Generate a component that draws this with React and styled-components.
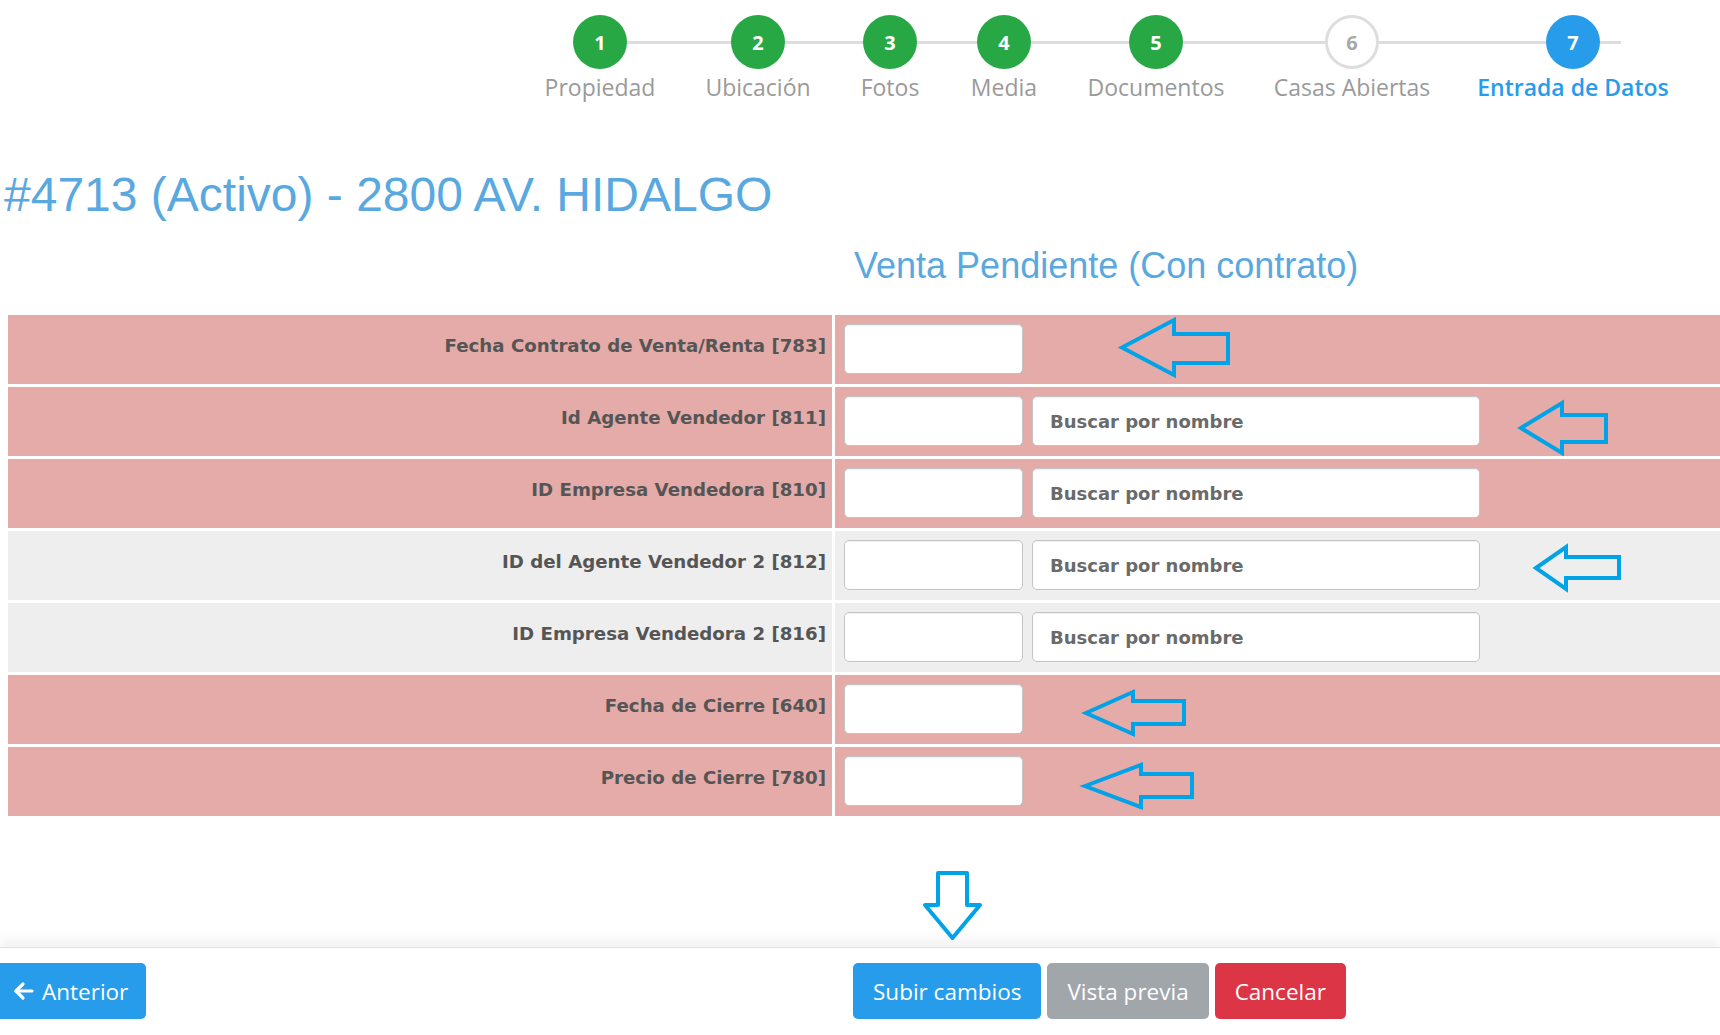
import React from "react";
import styled, { createGlobalStyle } from "styled-components";

const GlobalStyle = createGlobalStyle`
  html, body { margin: 0; padding: 0; background: #fff; }
  * { box-sizing: border-box; }
`;

const Page = styled.div`
  position: relative;
  height: 100vh;
  min-height: 1035px;
  display: flex;
  flex-direction: column;
  font-family: "Open Sans", "Noto Sans", sans-serif;
  overflow: hidden;
`;

const Stepper = styled.div`
  position: relative;
  display: flex;
  padding-top: 15px;
  height: 110px;
  &::before {
    content: "";
    position: absolute;
    left: 600px;
    width: 1021px;
    top: 41px;
    height: 3px;
    background: #dddddd;
  }
`;

const Step = styled.div`
  width: 100px;
  margin-left: ${(p) => p.$ml}px;
  display: flex;
  flex-direction: column;
  align-items: center;
  position: relative;
  z-index: 1;
`;

const Circle = styled.div`
  width: 54px;
  height: 54px;
  border-radius: 50%;
  display: flex;
  align-items: center;
  justify-content: center;
  font-weight: 700;
  font-size: 20px;
  background: ${(p) => (p.$state === "done" ? "#28a745" : p.$state === "active" ? "#279ceb" : "#fff")};
  color: ${(p) => (p.$state === "todo" ? "#a8a8a8" : "#fff")};
  border: ${(p) => (p.$state === "todo" ? "3px solid #dddddd" : "none")};
`;

const StepLabel = styled.div`
  margin-top: 3px;
  white-space: nowrap;
  font-size: 23px;
  line-height: 30px;
  color: ${(p) => (p.$active ? "#279ceb" : "#9a9a9a")};
  font-weight: ${(p) => (p.$active ? 600 : 400)};
`;

const Title = styled.h1`
  margin: 55px 0 0 4px;
  font-family: "Liberation Sans", Arial, sans-serif;
  font-weight: 400;
  font-size: 48px;
  line-height: 60px;
  color: #59a9e0;
`;

const SectionHeading = styled.h2`
  margin: 19px 0 0 854px;
  font-family: "Liberation Sans", Arial, sans-serif;
  font-weight: 400;
  font-size: 36px;
  line-height: 43px;
  color: #59a9e0;
`;

const FormTable = styled.div`
  margin: 28px 0 0 8px;
  display: grid;
  grid-template-columns: 824px 1fr;
  column-gap: 3px;
  row-gap: 3px;
`;

const LabelCell = styled.div`
  height: 69px;
  background: ${(p) => (p.$tone === "pink" ? "#e4aba8" : "#eeeeee")};
  text-align: right;
  padding: 21px 6px 0 0;
  font-family: "DejaVu Sans", Verdana, sans-serif;
  font-weight: 700;
  font-size: 18.2px;
  line-height: 20px;
  color: #555555;
`;

const ValueCell = styled.div`
  height: 69px;
  background: ${(p) => (p.$tone === "pink" ? "#e4aba8" : "#eeeeee")};
  display: flex;
  gap: 9px;
  padding: 9px 0 0 9px;
`;

const Input = styled.input`
  width: ${(p) => (p.$wide ? 448 : 179)}px;
  height: 50px;
  border: 1px solid #c4c4c4;
  border-radius: 5px;
  background: #fff;
  padding: 0 17px;
  font-family: "DejaVu Sans", Verdana, sans-serif;
  font-weight: 700;
  font-size: 18px;
  color: #555;
  box-shadow: inset 0 1px 1px rgba(0, 0, 0, 0.06);
  &::placeholder { color: #6a6a6a; opacity: 1; }
`;

const Footer = styled.footer`
  margin-top: auto;
  height: 88px;
  background: #fff;
  border-top: 1px solid #e0e0e0;
  box-shadow: 0 -7px 12px rgba(0, 0, 0, 0.06);
  display: grid;
  grid-template-columns: 853px 1fr;
  align-items: start;
  padding-top: 15px;
  position: relative;
  z-index: 2;
`;

const ButtonGroup = styled.div`
  display: flex;
  gap: 6px;
`;

const Button = styled.button`
  height: 56px;
  padding: 0 20px;
  border: none;
  border-radius: 5px;
  font-family: "Open Sans", "Noto Sans", sans-serif;
  font-size: 22.5px;
  color: #fff;
  display: inline-flex;
  align-items: center;
  gap: 8px;
  background: ${(p) => (p.$variant === "secondary" ? "#a1a6ab" : p.$variant === "danger" ? "#dc3545" : "#279ceb")};
`;

const BackButton = styled(Button)`
  width: 146px;
  padding: 0 0 0 13px;
  border-radius: 0 5px 5px 0;
`;

const ArrowSvg = styled.svg`
  position: absolute;
  left: ${(p) => p.$x}px;
  top: ${(p) => p.$y}px;
  overflow: visible;
  z-index: 3;
  pointer-events: none;
`;

const BLUE = "#00a2e8";

function LeftArrow({ x, y, w, h, head, s1, s2 }) {
  const pts = `0,${h / 2} ${head},0 ${head},${s1} ${w},${s1} ${w},${s2} ${head},${s2} ${head},${h} 0,${h / 2}`;
  return (
    <ArrowSvg $x={x} $y={y} width={w} height={h} viewBox={`0 0 ${w} ${h}`}>
      <polygon points={pts} fill="none" stroke={BLUE} strokeWidth="4" strokeLinejoin="miter" />
    </ArrowSvg>
  );
}

function DownArrow({ x, y }) {
  const w = 55;
  const h = 65;
  const pts = `13,0 42,0 42,32 ${w},32 27.5,${h} 0,32 13,32 13,0`;
  return (
    <ArrowSvg $x={x} $y={y} width={w} height={h} viewBox={`0 0 ${w} ${h}`}>
      <polygon points={pts} fill="none" stroke={BLUE} strokeWidth="4" strokeLinejoin="round" />
    </ArrowSvg>
  );
}

function ArrowLeftIcon() {
  return (
    <svg width="21" height="20" viewBox="0 0 21 20" fill="none" stroke="#fff" strokeWidth="3.2" strokeLinecap="round" strokeLinejoin="round">
      <path d="M19 10H3" />
      <path d="M10 3L3 10l7 7" />
    </svg>
  );
}

const steps = [
  { n: 1, label: "Propiedad", state: "done", ml: 550 },
  { n: 2, label: "Ubicación", state: "done", ml: 58 },
  { n: 3, label: "Fotos", state: "done", ml: 32 },
  { n: 4, label: "Media", state: "done", ml: 14 },
  { n: 5, label: "Documentos", state: "done", ml: 52 },
  { n: 6, label: "Casas Abiertas", state: "todo", ml: 96 },
  { n: 7, label: "Entrada de Datos", state: "active", ml: 121 },
];

const rows = [
  { label: "Fecha Contrato de Venta/Renta [783]", tone: "pink", search: false },
  { label: "Id Agente Vendedor [811]", tone: "pink", search: true },
  { label: "ID Empresa Vendedora [810]", tone: "pink", search: true },
  { label: "ID del Agente Vendedor 2 [812]", tone: "grey", search: true },
  { label: "ID Empresa Vendedora 2 [816]", tone: "grey", search: true },
  { label: "Fecha de Cierre [640]", tone: "pink", search: false },
  { label: "Precio de Cierre [780]", tone: "pink", search: false },
];

export default function App() {
  return (
    <>
      <GlobalStyle />
      <Page>
        <Stepper>
          {steps.map((s) => (
            <Step key={s.n} $ml={s.ml}>
              <Circle $state={s.state}>{s.n}</Circle>
              <StepLabel $active={s.state === "active"}>{s.label}</StepLabel>
            </Step>
          ))}
        </Stepper>

        <Title>#4713 (Activo) - 2800 AV. HIDALGO</Title>
        <SectionHeading>Venta Pendiente (Con contrato)</SectionHeading>

        <FormTable>
          {rows.map((r) => (
            <React.Fragment key={r.label}>
              <LabelCell $tone={r.tone}>{r.label}</LabelCell>
              <ValueCell $tone={r.tone}>
                <Input />
                {r.search && <Input $wide placeholder="Buscar por nombre" />}
              </ValueCell>
            </React.Fragment>
          ))}
        </FormTable>

        <LeftArrow x={1122} y={320} w={106} h={55} head={52} s1={14} s2={43} />
        <LeftArrow x={1521} y={403} w={85} h={50} head={41} s1={12} s2={39} />
        <LeftArrow x={1536} y={547} w={83} h={42} head={30} s1={10} s2={31} />
        <LeftArrow x={1086} y={692} w={98} h={42} head={47} s1={9} s2={32} />
        <LeftArrow x={1085} y={765} w={107} h={42} head={56} s1={9} s2={32} />
        <DownArrow x={925} y={873} />

        <Footer>
          <div>
            <BackButton>
              <ArrowLeftIcon />
              Anterior
            </BackButton>
          </div>
          <ButtonGroup>
            <Button>Subir cambios</Button>
            <Button $variant="secondary">Vista previa</Button>
            <Button $variant="danger">Cancelar</Button>
          </ButtonGroup>
        </Footer>
      </Page>
    </>
  );
}
